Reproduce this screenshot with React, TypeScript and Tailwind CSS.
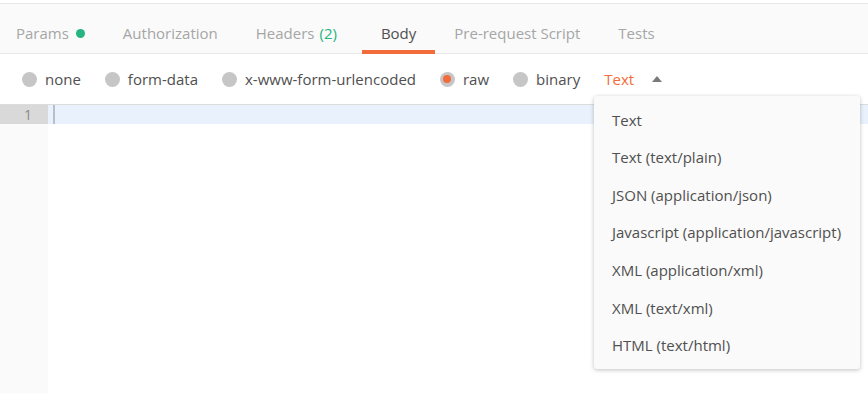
import { useState } from "react";

type Tab = {
  label: string;
  extra?: "dot" | "count";
};

const TABS: Tab[] = [
  { label: "Params", extra: "dot" },
  { label: "Authorization" },
  { label: "Headers", extra: "count" },
  { label: "Body" },
  { label: "Pre-request Script" },
  { label: "Tests" },
];

const BODY_MODES = ["none", "form-data", "x-www-form-urlencoded", "raw", "binary"];

const CONTENT_TYPES = [
  "Text",
  "Text (text/plain)",
  "JSON (application/json)",
  "Javascript (application/javascript)",
  "XML (application/xml)",
  "XML (text/xml)",
  "HTML (text/html)",
];

function Radio({ checked }: { checked: boolean }) {
  if (checked) {
    return (
      <span className="flex h-[15px] w-[15px] items-center justify-center rounded-full bg-[#c6c6c6]">
        <span className="h-[8px] w-[8px] rounded-full bg-[#f26b3a]" />
      </span>
    );
  }

  return <span className="h-[15px] w-[15px] rounded-full bg-[#c6c6c6]" />;
}

export default function App() {
  const [activeTab, setActiveTab] = useState("Body");
  const [mode, setMode] = useState("raw");
  const [contentType, setContentType] = useState("Text");
  const [menuOpen, setMenuOpen] = useState(true);

  return (
    <div
      className="relative h-[394px] w-[868px] overflow-hidden bg-white text-[15px] text-[#505050]"
      style={{ fontFamily: '"Open Sans", "Liberation Sans", sans-serif' }}
    >
      <div className="mt-[3px] flex h-[51px] border-y border-[#e8e8e8] bg-[#fafafa]">
        {TABS.map((tab, index) => {
          const isActive = tab.label === activeTab;

          return (
            <button
              key={tab.label}
              onClick={() => setActiveTab(tab.label)}
              className={`flex h-[50px] items-center border-b-4 pt-[12px] ${
                index === 0
                  ? "pl-[16px] pr-[19px]"
                  : tab.extra === "count"
                    ? "pl-[19px] pr-[25px]"
                    : "px-[19px]"
              } ${
                isActive
                  ? "border-[#f26b3a] text-[#505050]"
                  : "border-transparent text-[#a6a6a6]"
              }`}
            >
              {tab.label}
              {tab.extra === "dot" && (
                <span className="ml-[7px] h-[9px] w-[9px] rounded-full bg-[#26b47f]" />
              )}
              {tab.extra === "count" && (
                <span className="ml-[5px] text-[#26b47f]">(2)</span>
              )}
            </button>
          );
        })}
      </div>

      <div className="flex h-[50px] items-center pl-[22px]">
        {BODY_MODES.map((item) => (
          <button
            key={item}
            onClick={() => setMode(item)}
            className="mr-[24px] flex items-center gap-[8px] text-[#505050]"
          >
            <Radio checked={mode === item} />
            {item}
          </button>
        ))}
        <button
          onClick={() => setMenuOpen(!menuOpen)}
          className="flex items-center gap-[18px] text-[#f26b3a]"
        >
          {contentType}
          <svg width="10" height="6" viewBox="0 0 10 6">
            <path d="M5 0 L10 6 L0 6 Z" fill="#7a7a7a" />
          </svg>
        </button>
      </div>

      <div className="flex h-[289px] border-t border-[#dcdcdc]">
        <div className="w-[48px] bg-[#fafafa]">
          <div className="flex h-[19px] items-center justify-end bg-[#d9d9d9] pr-[16px] text-[14px] text-[#8a8a8a]">
            1
          </div>
        </div>
        <div className="flex-1">
          <div className="flex h-[19px] bg-[#e8f1fc] pl-[5px]">
            <span className="h-[19px] w-[2px] bg-[#b4c0cc]" />
          </div>
        </div>
      </div>

      {menuOpen && (
        <div className="absolute left-[594px] top-[96px] flex h-[273px] w-[266px] flex-col rounded-[3px] bg-[#fafafa] pt-[5px] shadow-[0_1px_4px_rgba(0,0,0,0.25)]">
          {CONTENT_TYPES.map((item) => (
            <button
              key={item}
              onClick={() => {
                setContentType(item.split(" ")[0]);
                setMenuOpen(false);
              }}
              className="flex h-[37.6px] items-center pl-[18px] text-left text-[#505050]"
            >
              {item}
            </button>
          ))}
        </div>
      )}
    </div>
  );
}
